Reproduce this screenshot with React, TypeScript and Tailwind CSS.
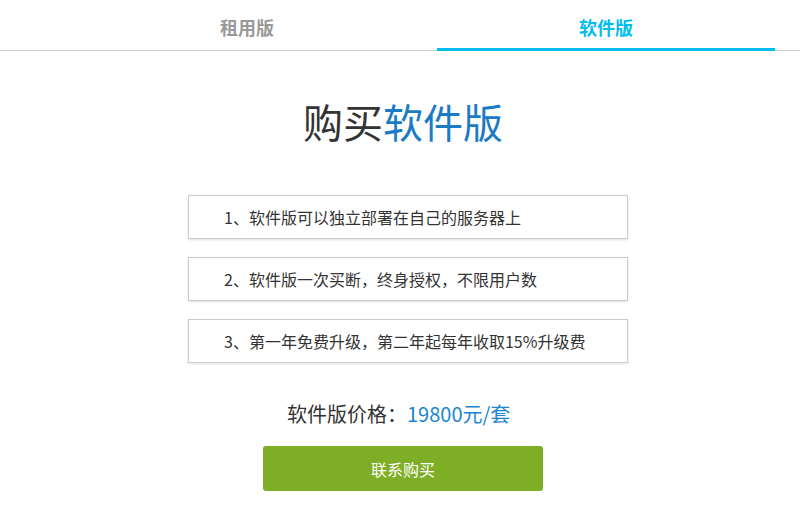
export default function App() {
  const items = [
    "1、软件版可以独立部署在自己的服务器上",
    "2、软件版一次买断，终身授权，不限用户数",
    "3、第一年免费升级，第二年起每年收取15%升级费",
  ];

  return (
    <div
      className="w-[800px] h-[522px] bg-white overflow-hidden"
      style={{ fontFamily: '"Noto Sans CJK SC", "Noto Sans", sans-serif' }}
    >
      {/* tabs */}
      <div className="flex h-[51px] border-b border-[#cccccc] pl-[78px]">
        <div className="w-[338px] flex items-center justify-center pt-[4px] text-[18px] font-bold text-[#999999]">
          租用版
        </div>
        <div className="ml-[21px] w-[338px] flex items-center justify-center text-[18px] font-bold text-[#00bdf0] border-b-[3px] border-[#00bdf0] -mb-px pt-[7px]">
          软件版
        </div>
      </div>

      <h1 className="mt-[40px] pl-[303px] text-[40px] leading-[60px] text-[#333333]">
        购买<span className="text-[#1a7bc4]">软件版</span>
      </h1>

      <div className="mt-[44px] ml-[188px] flex flex-col gap-[18px]">
        {items.map((t) => (
          <div
            key={t}
            className="w-[440px] h-[44px] border border-[#cccccc] shadow-[0_1px_2px_rgba(0,0,0,0.12)] flex items-center pl-[35px] text-[16px] text-[#333333]"
          >
            {t}
          </div>
        ))}
      </div>

      <div className="mt-[36px] ml-[287px] text-[20px] leading-[30px] text-[#333333]">
        软件版价格：<span className="text-[#1a85d0]">19800元/套</span>
      </div>

      <div className="mt-[17px] ml-[263px]">
        <button className="w-[280px] h-[45px] rounded-[3px] bg-[#7eae25] text-white text-[16px]">
          联系购买
        </button>
      </div>
    </div>
  );
}
